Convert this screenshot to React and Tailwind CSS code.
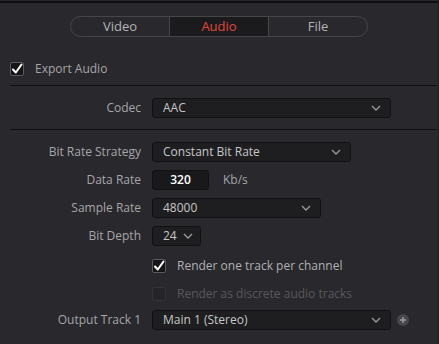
import React from "react";

const font = { fontFamily: '"Open Sans", "Noto Sans", sans-serif' };

function Chevron() {
  return (
    <svg width="10" height="6" viewBox="0 0 10 6" className="shrink-0">
      <path d="M1 1 L5 5 L9 1" fill="none" stroke="#9a9a9e" strokeWidth="1.3" />
    </svg>
  );
}

function Select({ value, width }) {
  return (
    <div
      className={`flex h-5 items-center justify-between rounded-[3px] border border-[#111113] bg-[#1e1e21] pl-[10px] pr-[9px] text-[12px] text-[#c6c6c6] ${width}`}
    >
      <span>{value}</span>
      <Chevron />
    </div>
  );
}

function Check({ checked, disabled }) {
  return (
    <div
      className={`flex h-[14px] w-[14px] shrink-0 items-center justify-center rounded-[2px] border ${
        disabled ? "border-[#343438] bg-[#252528]" : "border-[#5a5a5e] bg-[#161618]"
      }`}
    >
      {checked && (
        <svg width="12" height="12" viewBox="0 0 12 12">
          <path d="M2 6.5 L4.8 9.5 L10.5 1.5" fill="none" stroke="#ffffff" strokeWidth="2" strokeLinecap="round" strokeLinejoin="round" />
        </svg>
      )}
    </div>
  );
}

function Row({ label, children, className = "" }) {
  return (
    <div className={`flex h-5 items-center ${className}`}>
      <div className="w-[141px] shrink-0 text-right text-[12px] text-[#a6a6a8]">{label}</div>
      <div className="ml-[11px] flex items-center">{children}</div>
    </div>
  );
}

export default function App() {
  return (
    <div style={font} className="relative h-[344px] w-[439px] overflow-hidden border-r border-[#1d1d20] bg-[#28282d]">
      <div className="mt-px h-[2px] w-full bg-[#0f0f11]" />
      <div className="mt-[13px] flex justify-center">
        <div className="flex h-[21px] w-[298px] overflow-hidden rounded-full border border-[#45454a] text-[13px] font-medium">
          <div className="flex flex-1 items-center justify-center text-[#b4b4b6]">Video</div>
          <div className="flex flex-1 items-center justify-center border-x border-[#45454a] bg-[#1b1b1d] text-[#e0463c]">Audio</div>
          <div className="flex flex-1 items-center justify-center text-[#b4b4b6]">File</div>
        </div>
      </div>
      <div className="mt-[25px] flex h-[14px] items-center pl-[10px]">
        <Check checked />
        <span className="ml-[11px] text-[12px] text-[#a6a6a8]">Export Audio</span>
      </div>
      <div className="ml-[10px] mt-[9px] h-px w-[427px] bg-[#0f0f11]" />
      <div className="mt-[12px]">
        <Row label="Codec">
          <Select value="AAC" width="w-[239px]" />
        </Row>
      </div>
      <div className="ml-[10px] mt-[11px] h-px w-[427px] bg-[#0f0f11]" />
      <div className="mt-[12px] flex flex-col gap-2">
        <Row label="Bit Rate Strategy">
          <Select value="Constant Bit Rate" width="w-[199px]" />
        </Row>
        <Row label="Data Rate">
          <div className="flex h-5 w-[57px] items-center justify-center rounded-[3px] border border-[#111113] bg-[#19191b] text-[12px] font-semibold text-white">
            320
          </div>
          <span className="ml-[14px] text-[12px] text-[#a6a6a8]">Kb/s</span>
        </Row>
        <Row label="Sample Rate">
          <Select value="48000" width="w-[169px]" />
        </Row>
        <Row label="Bit Depth">
          <div className="flex h-5 w-[49px] items-center gap-[6px] rounded-[3px] border border-[#111113] bg-[#1e1e21] pl-[10px] text-[12px] text-[#c6c6c6]">
            <span>24</span>
            <Chevron />
          </div>
        </Row>
        <Row label="" className="mt-[2px]">
          <Check checked />
          <span className="ml-[11px] text-[12px] text-[#b0b0b2]">Render one track per channel</span>
        </Row>
        <Row label="">
          <Check disabled />
          <span className="ml-[11px] text-[12px] text-[#58585c]">Render as discrete audio tracks</span>
        </Row>
        <Row label="Output Track 1" className="-mt-[2px]">
          <Select value="Main 1 (Stereo)" width="w-[239px]" />
          <div className="ml-[6px] flex h-[12px] w-[12px] items-center justify-center rounded-full bg-[#47474b]">
            <svg width="8" height="8" viewBox="0 0 8 8">
              <path d="M4 1 V7 M1 4 H7" stroke="#9c9ca0" strokeWidth="1.4" />
            </svg>
          </div>
        </Row>
      </div>
    </div>
  );
}
